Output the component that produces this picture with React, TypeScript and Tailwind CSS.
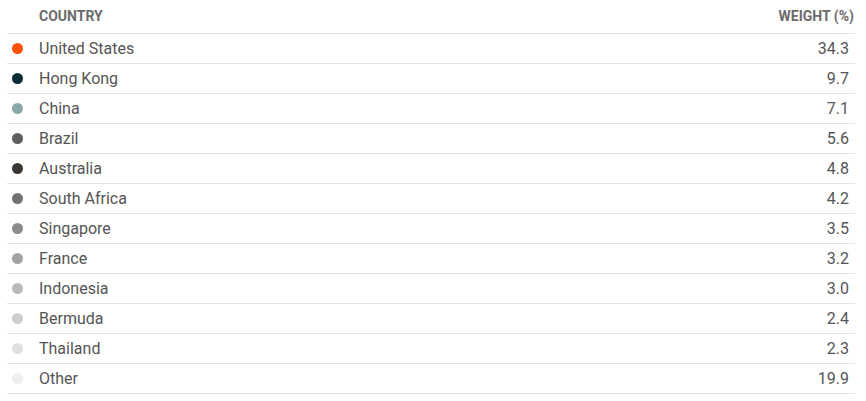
import React from "react";

const rows: [string, string, string][] = [
  ["United States", "34.3", "#fe5000"],
  ["Hong Kong", "9.7", "#0b2d35"],
  ["China", "7.1", "#86a8a8"],
  ["Brazil", "5.6", "#5e5e5e"],
  ["Australia", "4.8", "#3a3733"],
  ["South Africa", "4.2", "#727272"],
  ["Singapore", "3.5", "#8b8b8b"],
  ["France", "3.2", "#a3a3a3"],
  ["Indonesia", "3.0", "#bababa"],
  ["Bermuda", "2.4", "#cecece"],
  ["Thailand", "2.3", "#e0e0e0"],
  ["Other", "19.9", "#efefef"],
];

export default function App() {
  return (
    <div className="w-[866px] h-[401px] bg-white" style={{ fontFamily: "Roboto, 'Liberation Sans', sans-serif" }}>
      <div className="ml-[7px] w-[848px]">
        <div className="flex h-[34px] items-center justify-between border-b border-[#e3e3e3] text-[14px] font-bold text-[#6b6b6b]">
          <span className="pl-[32px]">COUNTRY</span>
          <span className="pr-[1px]">WEIGHT (%)</span>
        </div>
        {rows.map(([name, val, color]) => (
          <div key={name} className="flex h-[30px] items-center justify-between border-b border-[#e3e3e3] text-[16px] text-[#555555]">
            <div className="flex items-center">
              <span className="ml-[5px] h-[11px] w-[11px] rounded-full" style={{ backgroundColor: color }} />
              <span className="ml-[16px]">{name}</span>
            </div>
            <span className="pr-[6px]">{val}</span>
          </div>
        ))}
      </div>
    </div>
  );
}
